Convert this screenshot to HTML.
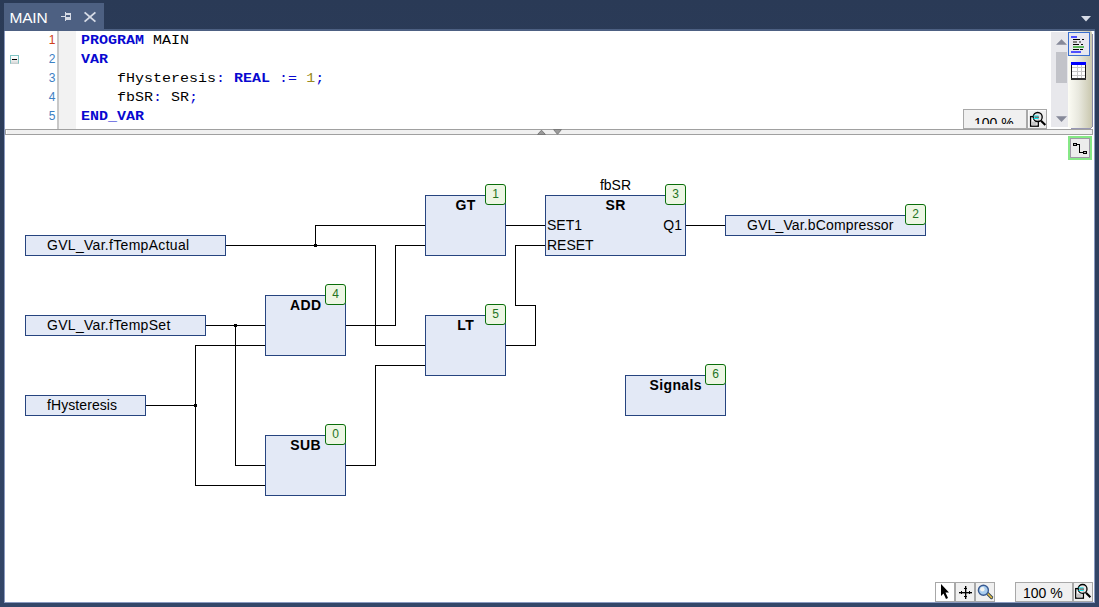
<!DOCTYPE html>
<html><head><meta charset="utf-8">
<style>
*{margin:0;padding:0;box-sizing:border-box}
html,body{width:1099px;height:607px;overflow:hidden}
body{position:relative;background:linear-gradient(#2a3a56,#334668);font-family:"Liberation Sans",sans-serif}
.abs{position:absolute}
#tab{left:4px;top:3px;width:100px;height:26px;background:#4d6082}
#tabtxt{left:9.5px;top:8.5px;font-size:15.5px;letter-spacing:-0.2px;color:#fff;line-height:18px}
#band{left:4px;top:29px;width:1091px;height:2px;background:#4d6082}
#doc{left:4px;top:31px;width:1091px;height:572px;background:#fff;border-left:1px solid #8a9ac0;border-bottom:1px solid #8a9ac0;border-right:1px solid #8a9ac0}
.ln{position:absolute;left:20px;width:35.5px;text-align:right;font-size:12px;line-height:17px;color:#3c80c4}
.code{position:absolute;left:81px;font-family:"Liberation Mono",monospace;font-size:15px;line-height:19px;color:#000;white-space:pre;transform:scaleY(0.88);transform-origin:0 13px}
.kw{color:#0808d0;font-weight:bold}
.op{color:#0808d0}
.num{color:#9a8a20}
.vbox{position:absolute;background:#e3e9f6;border:1px solid #26447f;font-size:14px;color:#000;line-height:16px;white-space:pre}
.blk{position:absolute;background:#e3e9f6;border:1px solid #26447f;font-size:14px;color:#000;white-space:pre}
.ttl{position:absolute;left:0;right:0;text-align:center;font-weight:bold;top:1px;line-height:16px;letter-spacing:0.35px;text-indent:0.35px}
.pin{position:absolute;line-height:16px}
.badge{position:absolute;width:21px;height:21px;background:#edf6e4;border:1px solid #0a6e0a;border-radius:3px;font-size:12px;color:#227322;text-align:center;line-height:18px}
.btn{position:absolute;background:#f0f0f0;border:1px solid #a8a8a8}
</style></head><body>
<div class="abs" id="tab"></div>
<div class="abs" id="tabtxt">MAIN</div>
<!-- pin icon -->
<svg class="abs" style="left:58px;top:9px" width="16" height="15" viewBox="0 0 16 15" shape-rendering="crispEdges">
<g fill="#d6dbe6"><rect x="3" y="7" width="4" height="1"/><rect x="7" y="3" width="1" height="9"/><rect x="8" y="4" width="5" height="2"/><rect x="8" y="8" width="5" height="3"/><rect x="12" y="4" width="1" height="7"/></g>
</svg>
<!-- close X -->
<svg class="abs" style="left:82px;top:9px" width="16" height="15" viewBox="0 0 16 15">
<path d="M2.6 3.4L13.4 12.6M13.4 3.4L2.6 12.6" stroke="#d6dbe6" stroke-width="1.9" fill="none"/>
</svg>
<svg class="abs" style="left:1080px;top:15px" width="12" height="8" viewBox="0 0 12 8"><path d="M1 1H11L6 6.4Z" fill="#d6dbe6"/></svg>
<div class="abs" id="band"></div>
<div class="abs" id="doc"></div>

<!-- code editor -->
<div class="abs" style="left:57px;top:31px;width:2px;height:98px;background:#c8c8c8"></div>
<div class="abs" style="left:59px;top:31px;width:17px;height:98px;background:#f2f2f2"></div>
<div class="ln" style="top:32px;color:#d0401a">1</div>
<div class="ln" style="top:51px">2</div>
<div class="ln" style="top:70px">3</div>
<div class="ln" style="top:89px">4</div>
<div class="ln" style="top:108px">5</div>
<div class="abs" style="left:10px;top:55px;width:9px;height:9px;border:1px solid #80c4c4;border-bottom-color:#c8d0d0;background:linear-gradient(#fff,#f4f4f4 50%,#d8d8d8)"></div>
<div class="abs" style="left:12px;top:59px;width:5px;height:1px;background:#000"></div>
<div class="code" style="top:31px"><span class="kw">PROGRAM</span> MAIN</div>
<div class="code" style="top:50px"><span class="kw">VAR</span></div>
<div class="code" style="top:69px">    fHysteresis<span class="op">:</span> <span class="kw">REAL</span> <span class="op">:=</span> <span class="num">1</span><span class="op">;</span></div>
<div class="code" style="top:88px">    fbSR<span class="op">:</span> SR<span class="op">;</span></div>
<div class="code" style="top:107px"><span class="kw">END_VAR</span></div>

<!-- code zoom box -->
<div class="btn" style="left:963px;top:109px;width:64px;height:20px;overflow:hidden"><div style="position:absolute;left:0;top:0;width:62px;height:14px;overflow:hidden"><div style="position:absolute;left:10px;top:5px;font-size:14px;line-height:16px;color:#000">100 %</div></div></div>
<div class="btn" style="left:1027px;top:109px;width:20px;height:20px;box-shadow:inset 1px 1px #fafafa"></div>
<svg class="abs" style="left:1028px;top:110px" width="19" height="18">
<rect x="2.6" y="6.6" width="7.7" height="9.6" fill="#fff" stroke="#000" stroke-width="1.3"/>
<rect x="3.6" y="11.5" width="5" height="3.6" fill="#c8c8c8"/>
<circle cx="9.7" cy="7" r="4.5" fill="#e4e4e4" fill-opacity="0.9" stroke="#000" stroke-width="1.3"/>
<path d="M5.5 6H10.5M5.5 8.5H10.5" stroke="#00e8f0" stroke-width="1"/><path d="M6.5 7.2H11" stroke="#222" stroke-width="0.8"/>
<path d="M13 10.8L17.3 15.1" stroke="#000" stroke-width="2.1"/>
</svg>

<!-- scrollbar -->
<div class="abs" style="left:1051px;top:32px;width:17px;height:95px;background:#e8e8ec"></div>
<svg class="abs" style="left:1055px;top:38px" width="13" height="8"><path d="M1 6.8L6.5 1.2L12 6.8Z" fill="#868999"/></svg>
<div class="abs" style="left:1056px;top:52px;width:11px;height:31px;background:#c2c3c9"></div>
<svg class="abs" style="left:1055px;top:115px" width="13" height="8"><path d="M1 1.2H12L6.5 7Z" fill="#868999"/></svg>
<!-- icon panel -->
<div class="abs" style="left:1068px;top:31px;width:24px;height:97px;background:linear-gradient(90deg,#fcfcf4,#e8e8de 45%,#c9c7ae);border-bottom-left-radius:3px;border-top-right-radius:2px"></div>
<div class="abs" style="left:1092px;top:34px;width:1px;height:93px;background:#8a8aa6"></div>
<div class="abs" style="left:1071px;top:128px;width:20px;height:1px;background:#9898b4"></div>
<div class="abs" style="left:1091px;top:127px;width:1px;height:1px;background:#9090ae"></div>
<div class="abs" style="left:1068px;top:32px;width:22px;height:24px;border:1px solid #3a6fcf;background:#e8e8f0"></div>
<svg class="abs" style="left:1068px;top:32px" width="22" height="24" shape-rendering="crispEdges">
<rect x="3" y="4" width="6" height="2" fill="#5050ff"/>
<rect x="5" y="7" width="7" height="1" fill="#000"/><rect x="14" y="7" width="2" height="1" fill="#000"/>
<rect x="5" y="9" width="4" height="2" fill="#808080"/><rect x="11" y="9" width="2" height="2" fill="#808080"/>
<rect x="5" y="12" width="6" height="1" fill="#000"/><rect x="13" y="12" width="2" height="1" fill="#000"/>
<rect x="5" y="14" width="11" height="2" fill="#5cb85c"/>
<rect x="5" y="17" width="6" height="1" fill="#000"/><rect x="12" y="17" width="3" height="1" fill="#000"/>
<rect x="3" y="19" width="10" height="2" fill="#5050ff"/>
</svg>
<svg class="abs" style="left:1071px;top:62px" width="15" height="18" shape-rendering="crispEdges">
<rect x="0" y="0" width="15" height="18" fill="#111"/>
<rect x="1" y="3" width="13" height="13" fill="#fff"/>
<rect x="0" y="0" width="15" height="3" fill="#0000ff"/>
<rect x="1" y="5" width="13" height="1" fill="#c8c8c8"/><rect x="1" y="9" width="13" height="1" fill="#c8c8c8"/><rect x="1" y="13" width="13" height="1" fill="#c8c8c8"/>
<rect x="6" y="3" width="1" height="13" fill="#c8c8c8"/><rect x="10" y="3" width="1" height="13" fill="#c8c8c8"/>
<rect x="0" y="16" width="15" height="2" fill="#333"/>
</svg>

<!-- splitter -->
<div class="abs" style="left:5px;top:129px;width:1088px;height:6px;background:#f0f0f0;border:1px solid #a0a0a0;box-shadow:inset 1px 0 #fff"></div>
<svg class="abs" style="left:536px;top:129px" width="28" height="6"><path d="M1.5 5.5L5.5 1.2L9.5 5.5Z" fill="#9a9a9a" stroke="#7a7a7a" stroke-width="1"/><path d="M17.5 0.5H25.5L21.5 5.3Z" fill="#9a9a9a" stroke="#7a7a7a" stroke-width="1"/></svg>

<!-- CFC toolbar icon -->
<div class="abs" style="left:1068px;top:136px;width:24px;height:24px;border:2px solid #86e886;background:#ececec"><div class="abs" style="left:0;top:0;width:20px;height:20px;border:1px solid #a098a8"></div></div>
<svg class="abs" style="left:1070px;top:138px" width="20" height="20" shape-rendering="crispEdges">
<rect x="3.5" y="5.5" width="3" height="2" fill="#bbb" stroke="#000"/>
<path d="M6.5 6.5H9.5V14.5H13.5" stroke="#000" fill="none"/>
<rect x="13.5" y="13.5" width="3" height="2" fill="#bbb" stroke="#000"/>
</svg>

<!-- bottom toolbar -->
<div class="btn" style="left:935px;top:582px;width:20px;height:20px;background:#fff"></div>
<div class="btn" style="left:955px;top:582px;width:20px;height:20px"></div>
<div class="btn" style="left:975px;top:582px;width:20px;height:20px"></div>
<svg class="abs" style="left:936px;top:583px" width="18" height="18" shape-rendering="crispEdges">
<path d="M5 1V13L7.5 10.5L10 16L12 15L9.5 9.5H13Z" fill="#000" shape-rendering="geometricPrecision"/>
</svg>
<svg class="abs" style="left:956px;top:583px" width="18" height="18" shape-rendering="crispEdges">
<g fill="#000"><rect x="3" y="9" width="13" height="1"/><rect x="9" y="3" width="1" height="13"/>
<rect x="5" y="8" width="1" height="3"/><rect x="13" y="8" width="1" height="3"/><rect x="8" y="5" width="3" height="1"/><rect x="8" y="13" width="3" height="1"/>
<rect x="3" y="8.5" width="13" height="2" opacity="0.35"/><rect x="8.5" y="3" width="2" height="13" opacity="0.35"/></g>
</svg>
<svg class="abs" style="left:976px;top:583px" width="18" height="18">
<path d="M11.5 10.5L15.5 14.5" stroke="#304050" stroke-width="3.2" stroke-linecap="round"/>
<path d="M11.5 10.5L15.5 14.5" stroke="#e8c040" stroke-width="1.6" stroke-linecap="round"/>
<circle cx="7.4" cy="7.2" r="5" fill="#a8cdf0" stroke="#3a5a90" stroke-width="1.4"/>
<circle cx="6.4" cy="6.2" r="2.2" fill="#f4f4f0"/>
</svg>
<div class="btn" style="left:1015px;top:582px;width:58px;height:20px"><div style="position:absolute;left:7px;top:2px;font-size:14px;line-height:16px;color:#000">100 %</div></div>
<div class="btn" style="left:1073px;top:582px;width:20px;height:20px"></div>
<svg class="abs" style="left:1074px;top:583px" width="19" height="18">
<rect x="1.7" y="5.6" width="7.7" height="9.6" fill="#fff" stroke="#000" stroke-width="1.3"/>
<rect x="2.7" y="10.5" width="5" height="3.6" fill="#c8c8c8"/>
<circle cx="8.6" cy="5.9" r="4.4" fill="#e4e4e4" fill-opacity="0.9" stroke="#000" stroke-width="1.3"/>
<path d="M4.5 4.9H9.5M4.5 7.4H9.5" stroke="#00e8f0" stroke-width="1"/><path d="M5.5 6.1H10" stroke="#222" stroke-width="0.8"/>
<path d="M12 9.8L16.4 14.2" stroke="#000" stroke-width="2.1"/>
</svg>

<!-- CFC diagram wires -->
<svg class="abs" style="left:0;top:0" width="1099" height="607">
<g stroke="#000" stroke-width="1" fill="none" shape-rendering="crispEdges">
<path d="M226 245.5H375.5V345.5H425"/>
<path d="M315.5 245V225.5H425"/>
<path d="M346 325.5H395.5V245.5H425"/>
<path d="M206 325.5H265"/>
<path d="M235.5 325V465.5H265"/>
<path d="M146 405.5H195.5"/>
<path d="M195.5 345V485.5H265"/>
<path d="M195 345.5H265"/>
<path d="M346 465.5H375.5V365.5H425"/>
<path d="M506 225.5H545"/>
<path d="M506 345.5H535.5V305.5H515.5V245.5H545"/>
<path d="M686 225.5H725"/>
</g>
<g fill="#000">
<rect x="314" y="244" width="3" height="3"/>
<rect x="234" y="324" width="3" height="3"/>
<rect x="194" y="404" width="3" height="3"/>
</g>
</svg>

<!-- variable boxes -->
<div class="vbox" style="left:25px;top:235px;width:201px;height:21px"><span class="abs" style="left:21px;top:1px;letter-spacing:0.3px">GVL_Var.fTempActual</span></div>
<div class="vbox" style="left:25px;top:315px;width:181px;height:21px"><span class="abs" style="left:21px;top:1px;letter-spacing:0.3px">GVL_Var.fTempSet</span></div>
<div class="vbox" style="left:25px;top:395px;width:121px;height:21px"><span class="abs" style="left:21px;top:1px;letter-spacing:0.08px">fHysteresis</span></div>
<div class="vbox" style="left:725px;top:215px;width:201px;height:21px"><span class="abs" style="left:21px;top:1px;letter-spacing:0.15px">GVL_Var.bCompressor</span></div>

<!-- blocks -->
<div class="blk" style="left:425px;top:195px;width:81px;height:61px"><div class="ttl">GT</div></div>
<div class="blk" style="left:545px;top:195px;width:141px;height:61px"><div class="ttl">SR</div><div class="pin" style="left:1px;top:21px">SET1</div><div class="pin" style="left:1px;top:41px">RESET</div><div class="pin" style="right:3px;top:21px">Q1</div></div>
<div class="abs" style="left:545px;top:177px;width:141px;text-align:center;font-size:14px;line-height:16px">fbSR</div>
<div class="blk" style="left:265px;top:295px;width:81px;height:61px"><div class="ttl">ADD</div></div>
<div class="blk" style="left:425px;top:315px;width:81px;height:61px"><div class="ttl">LT</div></div>
<div class="blk" style="left:265px;top:435px;width:81px;height:61px"><div class="ttl">SUB</div></div>
<div class="blk" style="left:625px;top:375px;width:101px;height:41px"><div class="ttl">Signals</div></div>

<!-- badges -->
<div class="badge" style="left:485px;top:184px">1</div>
<div class="badge" style="left:665px;top:184px">3</div>
<div class="badge" style="left:905px;top:204px">2</div>
<div class="badge" style="left:325px;top:284px">4</div>
<div class="badge" style="left:485px;top:304px">5</div>
<div class="badge" style="left:325px;top:424px">0</div>
<div class="badge" style="left:705px;top:364px">6</div>
</body></html>
